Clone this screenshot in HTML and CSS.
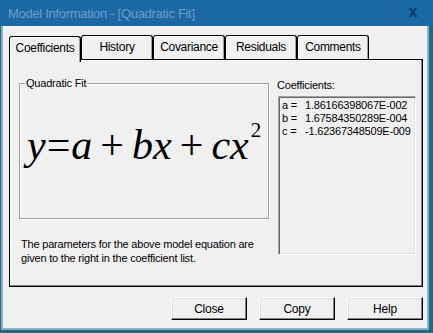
FILE: index.html
```html
<!DOCTYPE html>
<html lang="en">
	<head>
		<meta charset="UTF-8" />
		<title>Model Information</title>
		<link rel="stylesheet" href="styles.css">
	</head>
	<body>
		<div class="window">
			<div class="titlebar">
				<span class="title-text">Model Information - [Quadratic Fit]</span>
				<span class="title-close">x</span>
			</div>
			<div class="client">
				<div class="tabs">
					<div class="tab tab-active">Coefficients</div>
					<div class="tab">History</div>
					<div class="tab">Covariance</div>
					<div class="tab">Residuals</div>
					<div class="tab">Comments</div>
				</div>
				<div class="panel">
					<div class="panel-top">
						<fieldset class="group">
							<legend>Quadratic Fit</legend>
							<div class="equation">
								<i>y</i><span class="op-eq">=</span><i>a</i><span class="op">+</span><i>bx</i><span class="op">+</span><i>cx</i><sup>2</sup>
							</div>
						</fieldset>
						<div class="coef">
							<div class="coef-label">Coefficients:</div>
							<div class="coef-list">
								<div class="coef-row"><span class="coef-name">a =</span>1.86166398067E-002</div>
								<div class="coef-row"><span class="coef-name">b =</span>1.67584350289E-004</div>
								<div class="coef-row"><span class="coef-name">c =</span>-1.62367348509E-009</div>
							</div>
						</div>
					</div>
					<p class="hint">The parameters for the above model equation are<br>given to the right in the coefficient list.</p>
				</div>
				<div class="buttons">
					<button class="btn">Close</button>
					<button class="btn">Copy</button>
					<button class="btn">Help</button>
				</div>
			</div>
		</div>
	</body>
</html>
```

FILE: styles.css
```css
body {
	margin: 0;
	font-family: "Liberation Sans", Arial, sans-serif;
	font-size: 11px;
	letter-spacing: -0.2px;
	color: #000;
	background-color: #1e6a80;
}
.window {
	width: 433px;
	height: 333px;
	display: flex;
	flex-direction: column;
	background-color: #1e6a80;
	box-sizing: border-box;
	padding-bottom: 3px;
}
.titlebar {
	height: 26px;
	display: flex;
	align-items: center;
	background-color: #1b69a4;
	padding-left: 8px;
	flex-shrink: 0;
}
.title-text {
	flex: 1;
	color: #6d9cc9;
	font-size: 13px;
	letter-spacing: -0.3px;
}
.title-close {
	width: 31px;
	height: 26px;
	border-left: 1px solid #2c5d83;
	display: flex;
	align-items: center;
	justify-content: center;
	color: #0d3a63;
	font-size: 16px;
	font-weight: bold;
	letter-spacing: 0;
	padding-bottom: 3px;
	box-sizing: border-box;
	margin-right: 5px;
}
.client {
	flex: 1;
	display: flex;
	flex-direction: column;
	background-color: #f0f0f0;
	margin: 0 4px 0 1px;
	border: 2px solid #8fb0c8;
	border-top: none;
	padding: 9px 2px 0 6px;
}
.tabs {
	display: flex;
	height: 24px;
	position: relative;
	z-index: 1;
}
.tab {
	width: 72px;
	height: 24px;
	box-sizing: border-box;
	border: 1px solid #000;
	border-bottom: none;
	border-radius: 3px 3px 0 0;
	box-shadow: inset 1px 1px 0 #fff, inset -1px 0 0 #a0a0a0;
	display: flex;
	align-items: center;
	justify-content: center;
	padding-bottom: 1px;
	background-color: #f0f0f0;
	font-size: 12px;
	letter-spacing: -0.3px;
}
.tab-active {
	height: 26px;
	margin-top: 1px;
	padding-bottom: 3px;
}
.panel {
	width: 414px;
	height: 228px;
	box-sizing: border-box;
	border: 1px solid #000;
	box-shadow: inset -1px -1px 0 #808080, inset 1px 1px 0 #fff;
	padding: 16px 0 0 9px;
}
.panel-top {
	display: flex;
}
.group {
	width: 250px;
	height: 143px;
	box-sizing: border-box;
	margin: 0;
	padding: 0;
	border: 1px solid #a0a0a0;
	box-shadow: 1px 1px 0 #fff, inset 1px 1px 0 #fff;
}
.group legend {
	margin-left: 5px;
	padding: 0 1px;
	line-height: 14px;
}
.equation {
	font-family: "Liberation Serif", "Times New Roman", serif;
	font-size: 42px;
	letter-spacing: 0;
	padding: 30px 0 0 7px;
	white-space: nowrap;
	line-height: 50px;
}
.op-eq {
	margin: 0 1px;
}
.op {
	margin: 0 8px;
}
.equation sup {
	font-size: 21px;
	vertical-align: 0;
	position: relative;
	top: -22px;
	margin-left: 2px;
}
.coef {
	margin-left: 8px;
	margin-top: 2px;
}
.coef-label {
	line-height: 14px;
	margin-bottom: 4px;
}
.coef-list {
	width: 138px;
	height: 159px;
	box-sizing: border-box;
	margin-left: 1px;
	border: 1px solid #a0a0a0;
	border-right-color: #fff;
	border-bottom-color: #fff;
	box-shadow: inset 1px 1px 0 #696969, inset -1px -1px 0 #e3e3e3;
	padding: 2px 0 0 3px;
}
.coef-row {
	line-height: 13px;
	white-space: nowrap;
}
.coef-name {
	display: inline-block;
	width: 23px;
}
.hint {
	margin: -18px 0 0 2px;
	line-height: 14px;
}
.buttons {
	display: flex;
	justify-content: flex-end;
	gap: 12px;
	margin-top: 10px;
	width: 414px;
}
.btn {
	width: 76px;
	height: 23px;
	font-family: "Liberation Sans", Arial, sans-serif;
	font-size: 12px;
	letter-spacing: -0.2px;
	background-color: #f0f0f0;
	border: 1px solid #000;
	border-top-color: #fff;
	border-left-color: #fff;
	box-shadow: inset -1px -1px 0 #808080, inset 1px 1px 0 #e3e3e3;
	padding: 0;
}
```
